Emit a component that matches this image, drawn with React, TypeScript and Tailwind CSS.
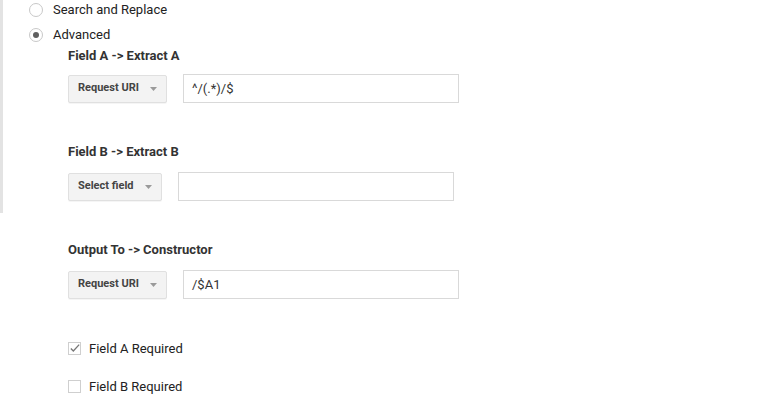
import React from 'react'

function Radio({ checked, label }: { checked?: boolean; label: string }) {
  return (
    <div className="flex items-center h-[25px]">
      <span className="w-[14px] h-[14px] rounded-full border border-[#c8c8c8] bg-white flex items-center justify-center">
        {checked && <span className="w-[6px] h-[6px] rounded-full bg-[#5f5f5f]" />}
      </span>
      <span className="ml-[10px] text-[13px] text-[#222]">{label}</span>
    </div>
  )
}

function Row({ select, value, selectW, inputW }: { select: string; value: string; selectW: string; inputW: string }) {
  return (
    <div className="flex items-center gap-4">
      <div className={`${selectW} h-[28px] bg-[#f3f3f3] border border-[#e0e0e0] rounded-[2px] flex items-center pl-[9px] pr-[9px] justify-between shadow-[0_1px_0_rgba(0,0,0,0.04)]`}>
        <span className="text-[11px] font-bold text-[#444]">{select}</span>
        <svg width="7" height="4" viewBox="0 0 7 4">
          <path d="M0 0 L7 0 L3.5 4 Z" fill="#9a9a9a" />
        </svg>
      </div>
      <div className={`${inputW} h-[29px] border border-[#d9d9d9] bg-white flex items-center pl-[8px] text-[13px] text-[#333]`}>
        {value}
      </div>
    </div>
  )
}

function Check({ checked, label }: { checked?: boolean; label: string }) {
  return (
    <div className="flex items-center">
      <span className="w-[13px] h-[13px] border border-[#cfcfcf] bg-white flex items-center justify-center">
        {checked && (
          <svg width="12" height="10" viewBox="0 0 12 10" className="-mt-[1px] ml-[1px]">
            <path d="M1 5.5 L4 8.5 L11 1" stroke="#777" strokeWidth="1.6" fill="none" />
          </svg>
        )}
      </span>
      <span className="ml-[8px] text-[13px] text-[#222]">{label}</span>
    </div>
  )
}

export default function App() {
  return (
    <div className="w-[768px] h-[415px] bg-white flex overflow-hidden" style={{ fontFamily: 'Roboto, "Liberation Sans", sans-serif' }}>
      <div className="w-[3px] h-[213px] bg-[#e3e3e3] shrink-0" />
      <div className="pl-[26px] -mt-[3px]">
        <Radio label="Search and Replace" />
        <Radio checked label="Advanced" />
        <div className="pl-[39px]">
          <div className="text-[13px] font-bold text-[#333] -mt-[1px] h-[20px] leading-[20px]">Field A -&gt; Extract A</div>
          <div className="mt-[8px]">
            <Row select="Request URI" value="^/(.*)/$" selectW="w-[99px]" inputW="w-[276px]" />
          </div>
          <div className="text-[13px] font-bold text-[#333] mt-[39px] h-[20px] leading-[20px]">Field B -&gt; Extract B</div>
          <div className="mt-[10px]">
            <Row select="Select field" value="" selectW="w-[94px]" inputW="w-[276px]" />
          </div>
          <div className="text-[13px] font-bold text-[#333] mt-[39px] h-[20px] leading-[20px]">Output To -&gt; Constructor</div>
          <div className="mt-[10px]">
            <Row select="Request URI" value="/$A1" selectW="w-[99px]" inputW="w-[276px]" />
          </div>
          <div className="mt-[40px] flex flex-col gap-[18px]">
            <Check checked label="Field A Required" />
            <Check label="Field B Required" />
          </div>
        </div>
      </div>
    </div>
  )
}
